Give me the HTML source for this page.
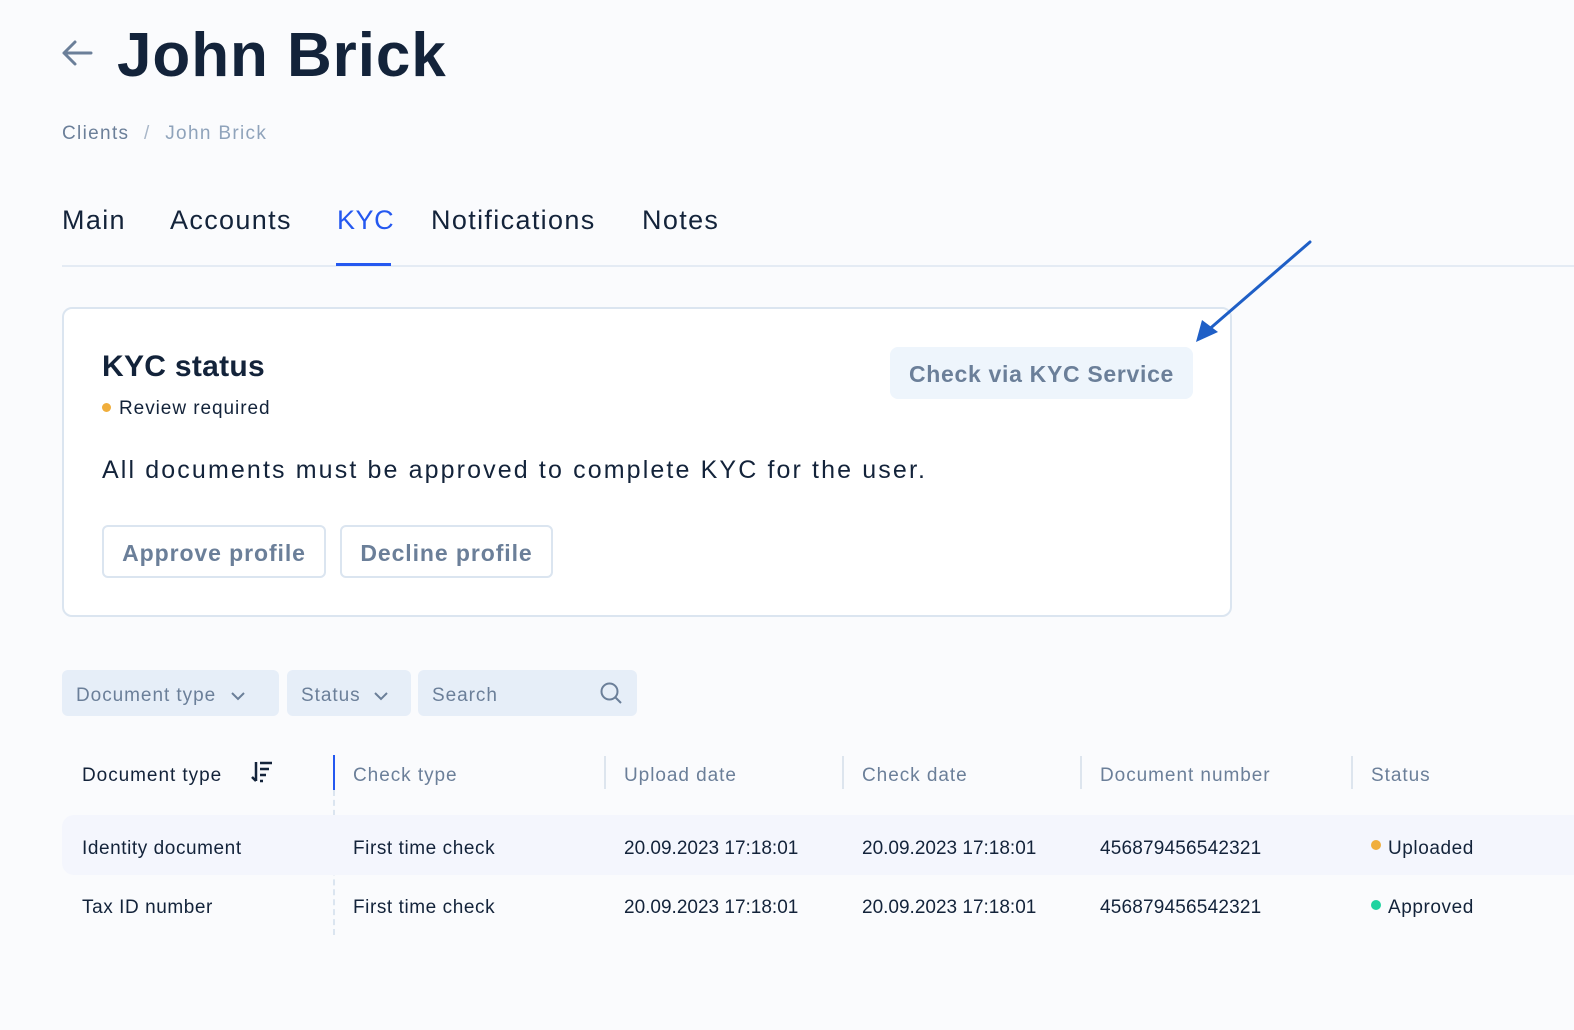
<!DOCTYPE html>
<html><head><meta charset="utf-8"><style>
*{margin:0;padding:0;box-sizing:border-box}
body{width:1574px;height:1030px;background:#fafbfd;font-family:"Liberation Sans",sans-serif;color:#13233a;position:relative;overflow:hidden}
.a{position:absolute;white-space:nowrap}
.ls{letter-spacing:.05em}
.btn{position:absolute;border:2px solid #dbe5f0;border-radius:6px;background:#fff;color:#6b7f99;font-weight:bold;font-size:23px;letter-spacing:.04em;display:flex;align-items:center;justify-content:center;padding-top:3px}
.flt{position:absolute;top:670px;height:46px;background:#e6eef8;border-radius:6px;color:#6b7f99;font-size:19px;letter-spacing:.05em;display:flex;align-items:center;padding-left:14px;padding-top:5px}
.th{position:absolute;top:765px;font-size:19px;color:#6b7f99;letter-spacing:.05em}
.sep{position:absolute;top:756px;width:2px;height:33px;background:#dde5ee}
.td{position:absolute;font-size:19px;letter-spacing:.03em;white-space:nowrap}
</style></head><body>
<svg class="a" style="left:60px;top:38px" width="34" height="30" viewBox="0 0 34 30"><path d="M31 15H4M15 4L4 15l11 11" fill="none" stroke="#6b7f99" stroke-width="3" stroke-linecap="round" stroke-linejoin="round"/></svg>
<div class="a" style="left:117px;top:20px;font-size:62px;font-weight:bold;letter-spacing:.015em">John Brick</div>
<div class="a" style="left:62px;top:123px;font-size:19px;color:#6b7f99;letter-spacing:.07em">Clients <span style="color:#a8b6c8;margin:0 8px">/</span> <span style="color:#8fa3bb">John Brick</span></div>
<div class="a ls" style="left:62px;top:205px;font-size:27px">Main</div>
<div class="a ls" style="left:170px;top:205px;font-size:27px">Accounts</div>
<div class="a" style="left:337px;top:205px;font-size:27px;color:#2458f0;letter-spacing:.02em">KYC</div>
<div class="a ls" style="left:431px;top:205px;font-size:27px">Notifications</div>
<div class="a ls" style="left:642px;top:205px;font-size:27px">Notes</div>
<div class="a" style="left:62px;top:265px;width:1512px;height:2px;background:#e4ebf4"></div>
<div class="a" style="left:336px;top:263px;width:55px;height:3px;background:#2458f0"></div>
<div class="a" style="left:62px;top:307px;width:1170px;height:310px;background:#fff;border:2px solid #dbe5f0;border-radius:10px"></div>
<div class="a" style="left:102px;top:350px;font-size:30px;font-weight:bold;letter-spacing:.01em">KYC status</div>
<div class="a" style="left:102px;top:403px;width:9px;height:9px;border-radius:50%;background:#f0ae3c"></div>
<div class="a ls" style="left:119px;top:398px;font-size:19px">Review required</div>
<div class="a" style="left:102px;top:456px;font-size:25px;letter-spacing:.085em">All documents must be approved to complete KYC for the user.</div>
<div class="a" style="left:890px;top:347px;width:303px;height:52px;background:#eef5fc;border-radius:8px;color:#6b7f99;font-weight:bold;font-size:23px;letter-spacing:.03em;display:flex;align-items:center;justify-content:center;padding-top:2px">Check via KYC Service</div>
<div class="btn" style="left:102px;top:525px;width:224px;height:53px">Approve profile</div>
<div class="btn" style="left:340px;top:525px;width:213px;height:53px">Decline profile</div>
<svg class="a" style="left:1190px;top:236px" width="130" height="110" viewBox="0 0 130 110"><path d="M120 6L16 96" stroke="#1f5fc6" stroke-width="3" stroke-linecap="round"/><path d="M6 106L12 84L28 96Z" fill="#1f5fc6"/></svg>
<div class="flt" style="left:62px;width:217px">Document type<svg style="margin-left:14px" width="16" height="10" viewBox="0 0 16 10"><path d="M2 2l6 6 6-6" fill="none" stroke="#6b7f99" stroke-width="2"/></svg></div>
<div class="flt" style="left:287px;width:124px">Status<svg style="margin-left:12px" width="16" height="10" viewBox="0 0 16 10"><path d="M2 2l6 6 6-6" fill="none" stroke="#6b7f99" stroke-width="2"/></svg></div>
<div class="flt" style="left:418px;width:219px">Search<svg style="position:absolute;right:14px;top:11px" width="24" height="24" viewBox="0 0 24 24"><circle cx="10.5" cy="10.5" r="8" fill="none" stroke="#6b7f99" stroke-width="2"/><path d="M16.5 16.5L22 22" stroke="#6b7f99" stroke-width="2"/></svg></div>
<div class="th" style="left:82px;color:#13233a">Document type</div>
<svg class="a" style="left:250px;top:760px" width="24" height="24" viewBox="0 0 24 24"><path d="M6 2v19M2 17l4 4" fill="none" stroke="#13233a" stroke-width="2.5"/><path d="M10 3h12M10 9h9M10 15h6M10 21h3" stroke="#13233a" stroke-width="2.5"/></svg>
<div class="a" style="left:333px;top:755px;width:2px;height:35px;background:#2458f0"></div>
<div class="a" style="left:333px;top:790px;width:0;height:145px;border-left:2px dashed #dbe5f0"></div>
<div class="th" style="left:353px">Check type</div>
<div class="sep" style="left:604px"></div><div class="th" style="left:624px">Upload date</div>
<div class="sep" style="left:842px"></div><div class="th" style="left:862px">Check date</div>
<div class="sep" style="left:1080px"></div><div class="th" style="left:1100px">Document number</div>
<div class="sep" style="left:1351px"></div><div class="th" style="left:1371px">Status</div>
<div class="a" style="left:62px;top:815px;width:1512px;height:60px;background:#f4f6fd;border-radius:12px 0 0 12px"></div>
<div class="td" style="left:82px;top:838px">Identity document</div>
<div class="td" style="left:353px;top:838px">First time check</div>
<div class="td" style="left:624px;top:838px;letter-spacing:0">20.09.2023 17:18:01</div>
<div class="td" style="left:862px;top:838px;letter-spacing:0">20.09.2023 17:18:01</div>
<div class="td" style="left:1100px;top:838px;letter-spacing:.01em">456879456542321</div>
<div class="a" style="left:1371px;top:840px;width:10px;height:10px;border-radius:50%;background:#f0ae3c"></div>
<div class="td" style="left:1388px;top:838px">Uploaded</div>
<div class="td" style="left:82px;top:897px">Tax ID number</div>
<div class="td" style="left:353px;top:897px">First time check</div>
<div class="td" style="left:624px;top:897px;letter-spacing:0">20.09.2023 17:18:01</div>
<div class="td" style="left:862px;top:897px;letter-spacing:0">20.09.2023 17:18:01</div>
<div class="td" style="left:1100px;top:897px;letter-spacing:.01em">456879456542321</div>
<div class="a" style="left:1371px;top:900px;width:10px;height:10px;border-radius:50%;background:#1fd3a0"></div>
<div class="td" style="left:1388px;top:897px">Approved</div>
</body></html>
